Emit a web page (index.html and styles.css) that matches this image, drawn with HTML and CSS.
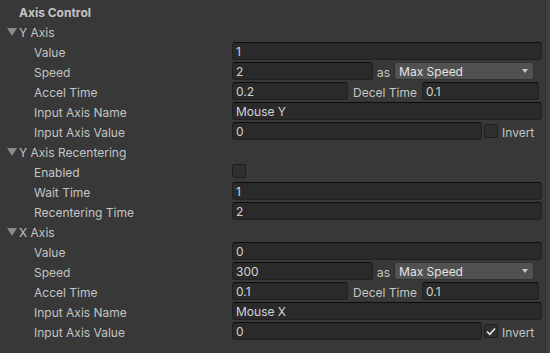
FILE: index.html
```html
<!DOCTYPE html>
<html lang="en">

<head>
    <meta charset="UTF-8">
    <title>Axis Control</title>
    <link rel="stylesheet" href="styles.css">
</head>

<body>
    <div class="panel">
        <div class="row title">Axis Control</div>

        <div class="row header"><span class="fold"></span>Y Axis</div>
        <div class="row"><span class="label">Value</span><span class="field">1</span></div>
        <div class="row">
            <span class="label">Speed</span>
            <span class="field speed">2</span>
            <span class="inline">as</span>
            <span class="dropdown">Max Speed<span class="arrow"></span></span>
        </div>
        <div class="row">
            <span class="label">Accel Time</span>
            <span class="field accel">0.2</span>
            <span class="inline decel">Decel Time</span>
            <span class="field decel-field">0.1</span>
        </div>
        <div class="row"><span class="label">Input Axis Name</span><span class="field">Mouse Y</span></div>
        <div class="row">
            <span class="label">Input Axis Value</span>
            <span class="field axis-value">0</span>
            <span class="toggle"></span>
            <span class="inline">Invert</span>
        </div>

        <div class="row header"><span class="fold"></span>Y Axis Recentering</div>
        <div class="row"><span class="label">Enabled</span><span class="toggle"></span></div>
        <div class="row"><span class="label">Wait Time</span><span class="field">1</span></div>
        <div class="row"><span class="label">Recentering Time</span><span class="field">2</span></div>

        <div class="row header"><span class="fold"></span>X Axis</div>
        <div class="row"><span class="label">Value</span><span class="field">0</span></div>
        <div class="row">
            <span class="label">Speed</span>
            <span class="field speed">300</span>
            <span class="inline">as</span>
            <span class="dropdown">Max Speed<span class="arrow"></span></span>
        </div>
        <div class="row">
            <span class="label">Accel Time</span>
            <span class="field accel">0.1</span>
            <span class="inline decel">Decel Time</span>
            <span class="field decel-field">0.1</span>
        </div>
        <div class="row"><span class="label">Input Axis Name</span><span class="field">Mouse X</span></div>
        <div class="row">
            <span class="label">Input Axis Value</span>
            <span class="field axis-value">0</span>
            <span class="toggle checked">
                <svg width="10" height="9" viewBox="0 0 10 9"><path d="M1 4.5 L3.8 7.3 L9 1.5" fill="none" stroke="#e6e6e6" stroke-width="1.6"/></svg>
            </span>
            <span class="inline">Invert</span>
        </div>
    </div>
    <div class="scrollbar"></div>
</body>

</html>
```

FILE: styles.css
```css
body {
    margin: 0;
    width: 550px;
    height: 353px;
    background-color: #383838;
    font-family: Inter, "Noto Sans", sans-serif;
    font-size: 12px;
    color: #c4c4c4;
    display: flex;
    overflow: hidden;
}

.panel {
    flex: 1;
    padding: 1px 3px 0 0;
}

.scrollbar {
    width: 4px;
    border-left: 1px solid #2b2b2b;
    background-color: #404040;
}

.row {
    display: flex;
    align-items: center;
    height: 20px;
}

.title {
    padding: 3px 0 0 19px;
    box-sizing: border-box;
    font-weight: bold;
}

.header {
    padding: 2px 0 0 7px;
    box-sizing: border-box;
}

.fold {
    width: 0;
    height: 0;
    border-left: 5px solid transparent;
    border-right: 5px solid transparent;
    border-top: 8px solid #8a8a8a;
    margin-right: 2px;
}

.label {
    width: 232px;
    padding: 2px 0 0 34px;
    box-sizing: border-box;
    flex-shrink: 0;
}

.inline {
    padding: 2px 4px 0;
}

.inline.decel {
    padding: 2px 5px 0;
}

.field {
    flex: 1;
    height: 18px;
    box-sizing: border-box;
    background-color: #2a2a2a;
    border: 1px solid #212121;
    border-top-color: #0d0d0d;
    border-radius: 3px;
    padding: 1px 0 0 3px;
    line-height: 15px;
    color: #d2d2d2;
}

.field.speed {
    flex: none;
    width: 141px;
}

.field.accel {
    flex: none;
    width: 116px;
}

.field.decel-field {
    flex: none;
    width: 117px;
}

.field.axis-value {
    flex: none;
    width: 250px;
}

.dropdown {
    position: relative;
    width: 140px;
    height: 18px;
    box-sizing: border-box;
    background-color: #515151;
    border: 1px solid #303030;
    border-radius: 3px;
    padding: 1px 0 0 4px;
    line-height: 15px;
    color: #e4e4e4;
}

.arrow {
    position: absolute;
    right: 5px;
    top: 6px;
    border-left: 3.5px solid transparent;
    border-right: 3.5px solid transparent;
    border-top: 4px solid #c8c8c8;
}

.toggle {
    width: 14px;
    height: 14px;
    box-sizing: border-box;
    background-color: #2f2f2f;
    border: 1px solid #1e1e1e;
    border-radius: 2px;
    margin-left: 2px;
    display: flex;
    align-items: center;
    justify-content: center;
}

.label + .toggle {
    margin-left: 0;
}
```
